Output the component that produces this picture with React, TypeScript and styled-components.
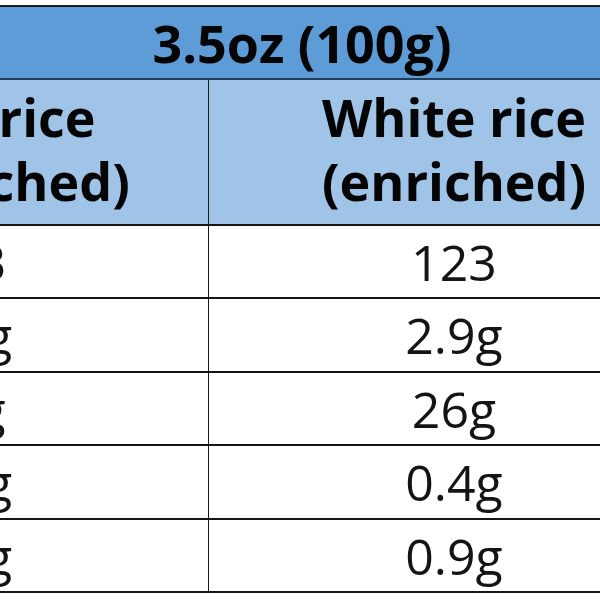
import React from 'react';
import styled, { createGlobalStyle } from 'styled-components';

const GlobalStyle = createGlobalStyle`
    html, body {
        margin: 0;
        padding: 0;
        background: #ffffff;
    }
    body {
        font-family: "Open Sans", "Liberation Sans", sans-serif;
    }
`;

const Viewport = styled.div`
    width: 600px;
    height: 600px;
    overflow: hidden;
    padding-top: 5px;
    box-sizing: border-box;
    background: #ffffff;
`;

const Table = styled.div`
    width: 980px;
    margin-left: -281px;
    display: grid;
    grid-template-columns: 490px 490px;
    color: #111;
`;

const Title = styled.div`
    grid-column: 1 / span 2;
    height: 75px;
    box-sizing: border-box;
    border-top: 2px solid #1c1c1c;
    border-bottom: 2px solid #203d5c;
    background: #5d9cd7;
    padding: 1px 0 0 186px;
    text-align: center;
    font-size: 52px;
    font-weight: 700;
    line-height: 70px;
    color: #050505;
`;

const HeadCell = styled.div<{ $last?: boolean }>`
    height: 146px;
    box-sizing: border-box;
    background: #9fc4e8;
    border-bottom: 2px solid #151515;
    border-right: ${(p) => (p.$last ? 'none' : '1.5px solid #1a1a1a')};
    padding-top: 5px;
    text-align: center;
    font-size: 52px;
    font-weight: 700;
    line-height: 64px;
    color: #050505;
`;

const Cell = styled.div<{ $last?: boolean }>`
    height: 73.4px;
    box-sizing: border-box;
    border-bottom: 2px solid #151515;
    border-right: ${(p) => (p.$last ? 'none' : '1.5px solid #1a1a1a')};
    padding-top: 2px;
    text-align: center;
    font-size: 50px;
    line-height: 69px;
    color: #141414;
`;

const rows = [
    ['123', '123'],
    ['2.9g', '2.9g'],
    ['28g', '26g'],
    ['0.4g', '0.4g'],
    ['0.4g', '0.9g'],
];

//------------------Component------------------
const App = () => {
    return (
        <>
            <GlobalStyle />
            <Viewport>
                <Table>
                    <Title>3.5oz (100g)</Title>
                    <HeadCell>
                        White rice
                        <br />
                        (unenriched)
                    </HeadCell>
                    <HeadCell $last>
                        White rice
                        <br />
                        (enriched)
                    </HeadCell>
                    {rows.map((row, i) => (
                        <React.Fragment key={i}>
                            <Cell>{row[0]}</Cell>
                            <Cell $last>{row[1]}</Cell>
                        </React.Fragment>
                    ))}
                </Table>
            </Viewport>
        </>
    );
};

export default App;
